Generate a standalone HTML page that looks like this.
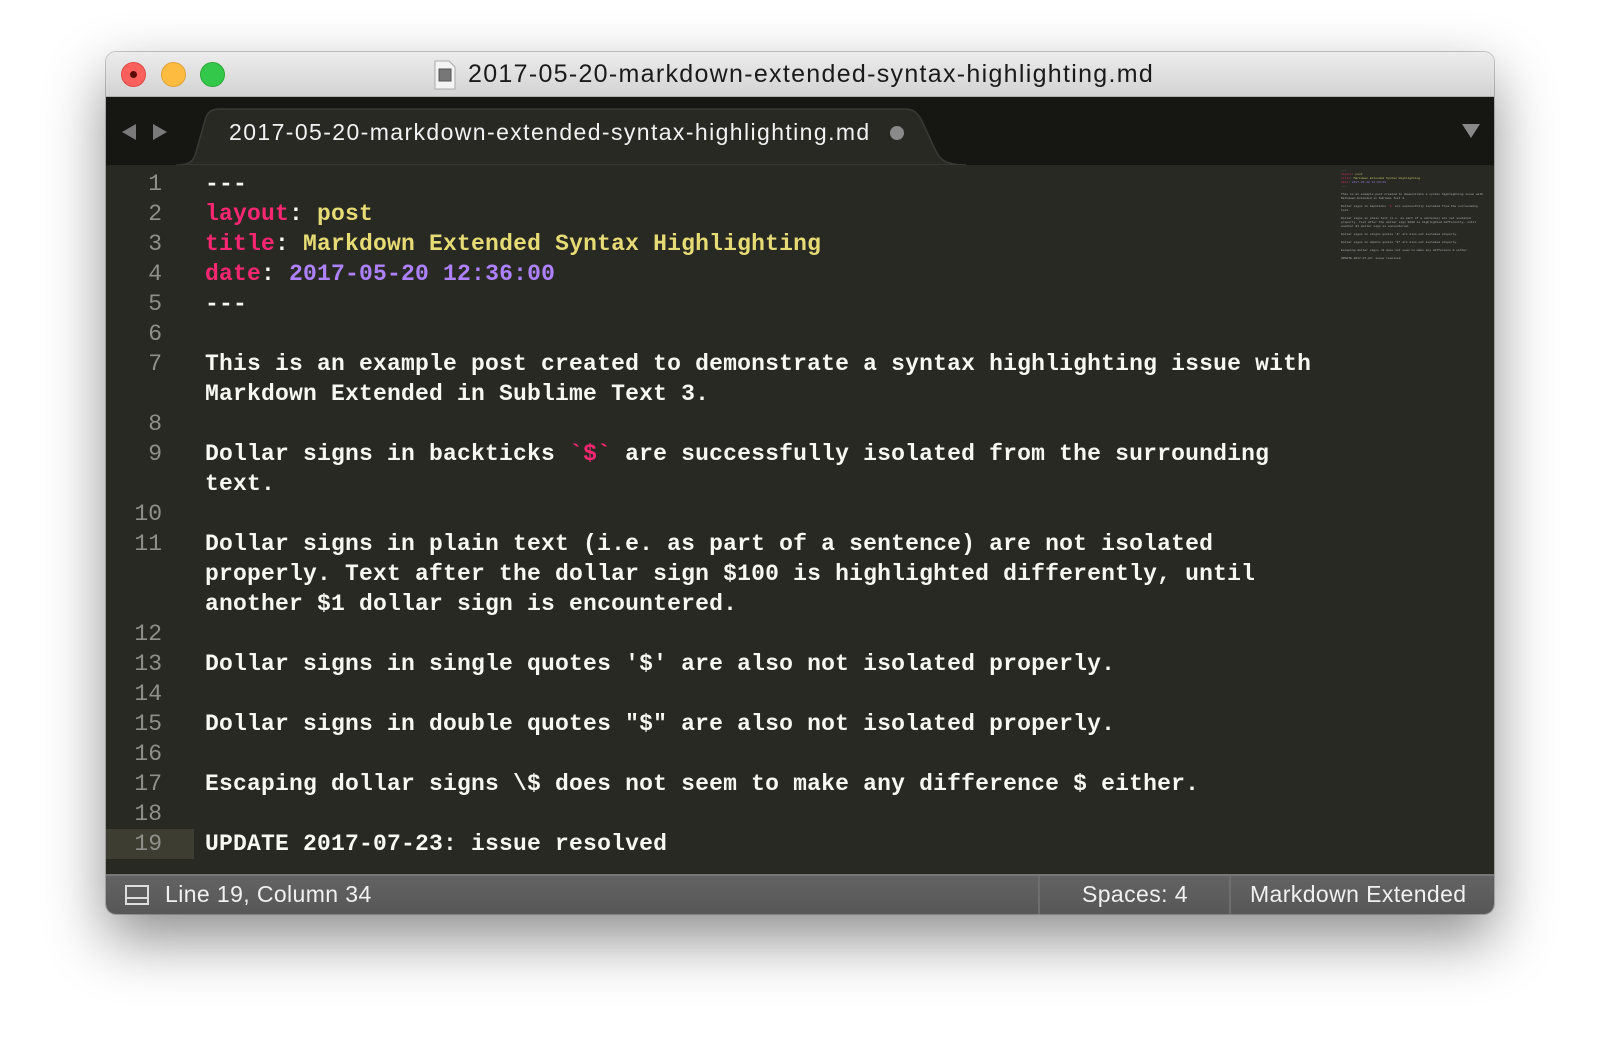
<!DOCTYPE html>
<html><head><meta charset="utf-8"><style>
*{margin:0;padding:0;box-sizing:border-box}
body{width:1599px;height:1063px;background:#fff;position:relative;overflow:hidden;font-family:"Liberation Sans",sans-serif}
#win{position:absolute;left:106px;top:52px;width:1388px;height:862px;border-radius:10px;overflow:hidden;box-shadow:0 25px 60px rgba(0,0,0,.45),0 0 0 1px rgba(0,0,0,.2)}
#title{position:absolute;left:0;top:0;width:100%;height:45px;background:linear-gradient(#ececec,#d3d3d3);border-bottom:1px solid #b0b0b0}
.tl{position:absolute;top:10px;width:25px;height:25px;border-radius:50%}
#ttext{position:absolute;left:362px;top:8px;font-size:25px;letter-spacing:1.3px;color:#1a1a1a;white-space:nowrap}
#tabbar{position:absolute;left:0;top:45px;width:100%;height:68px;background:#161613}
#editor{position:absolute;left:0;top:113px;width:100%;height:709px;background:#282923}
#status{position:absolute;left:0;top:822px;width:100%;height:40px;background:linear-gradient(#636363,#575757);border-top:2px solid #777;color:#f0f0f0;font-size:23px;letter-spacing:0.4px}
.ln{position:absolute;left:0;width:56px;text-align:right;color:#8f908a;font-family:"Liberation Mono",monospace;font-size:23px;line-height:30px}
.tx{position:absolute;left:99px;color:#f8f8f2;font-family:"Liberation Mono",monospace;font-size:23px;line-height:30px;white-space:pre;font-weight:bold;letter-spacing:0.2px}
.k{color:#f92672}.y{color:#e6db74}.p{color:#ae81ff}.r{color:#f92672}
</style></head><body>
<div id="win">
 <div id="title">
  <div class="tl" style="left:15px;background:#fc605c;border:1px solid #de4a45"><div style="position:absolute;left:8px;top:8px;width:7px;height:7px;border-radius:50%;background:#5a0a07"></div></div>
  <div class="tl" style="left:55px;background:#fdbc40;border:1px solid #dea236"></div>
  <div class="tl" style="left:94px;background:#34c84a;border:1px solid #27aa35"></div>
  <svg style="position:absolute;left:328px;top:8px" width="22" height="30"><path d="M1 1h14l6 6v22H1z" fill="#f4f4f4" stroke="#aaa"/><rect x="5" y="9" width="12" height="12" fill="#777" stroke="#555"/></svg>
  <div id="ttext">2017-05-20-markdown-extended-syntax-highlighting.md</div>
 </div>
 <div id="tabbar">
  <svg style="position:absolute;left:14px;top:26px" width="50" height="18"><path d="M2 9L16 1V17Z M33 1L47 9L33 17Z" fill="#7a7a7a"/></svg>
  <svg style="position:absolute;left:70px;top:10px" width="800" height="58"><path d="M0 58C18 58 18 52 22 38L30 10C33 3 38 2 44 2H728C736 2 740 4 745 12L758 40C763 52 768 58 790 58Z" fill="#282923" stroke="#3a3a35" stroke-width="1.5"/></svg>
  <div style="position:absolute;left:123px;top:22px;color:#f2f2f2;font-size:23px;white-space:nowrap;letter-spacing:1.4px">2017-05-20-markdown-extended-syntax-highlighting.md</div>
  <div style="position:absolute;left:784px;top:29px;width:14px;height:14px;border-radius:50%;background:#8a8a8a"></div>
  <svg style="position:absolute;left:1355px;top:26px" width="20" height="16"><path d="M1 1H19L10 15Z" fill="#888"/></svg>
 </div>
 <div id="editor">
  <div style="position:absolute;left:0;top:664px;width:88px;height:30px;background:#3e3d32"></div>
  <div class="ln" style="top:4px">1<br>2<br>3<br>4<br>5<br>6<br>7<br><br>8<br>9<br><br>10<br>11<br><br><br>12<br>13<br>14<br>15<br>16<br>17<br>18<br>19</div>
  <div class="tx" style="top:4px">---
<span class="k">layout</span>: <span class="y">post</span>
<span class="k">title</span>: <span class="y">Markdown Extended Syntax Highlighting</span>
<span class="k">date</span>: <span class="p">2017-05-20 12:36:00</span>
---

This is an example post created to demonstrate a syntax highlighting issue with
Markdown Extended in Sublime Text 3.

Dollar signs in backticks <span class="r">`$`</span> are successfully isolated from the surrounding
text.

Dollar signs in plain text (i.e. as part of a sentence) are not isolated
properly. Text after the dollar sign $100 is highlighted differently, until
another $1 dollar sign is encountered.

Dollar signs in single quotes '$' are also not isolated properly.

Dollar signs in double quotes "$" are also not isolated properly.

Escaping dollar signs \$ does not seem to make any difference $ either.

UPDATE 2017-07-23: issue resolved</div>
  <div style="position:absolute;left:1235px;top:4px;width:150px;font-family:'Liberation Mono',monospace;font-size:3px;line-height:4px;color:#ccc;white-space:pre;opacity:.8">---
<span class="k">layout</span>: <span class="y">post</span>
<span class="k">title</span>: <span class="y">Markdown Extended Syntax Highlighting</span>
<span class="k">date</span>: <span class="p">2017-05-20 12:36:00</span>
---

This is an example post created to demonstrate a syntax highlighting issue with
Markdown Extended in Sublime Text 3.

Dollar signs in backticks <span class="r">`$`</span> are successfully isolated from the surrounding
text.

Dollar signs in plain text (i.e. as part of a sentence) are not isolated
properly. Text after the dollar sign $100 is highlighted differently, until
another $1 dollar sign is encountered.

Dollar signs in single quotes '$' are also not isolated properly.

Dollar signs in double quotes "$" are also not isolated properly.

Escaping dollar signs \$ does not seem to make any difference $ either.

UPDATE 2017-07-23: issue resolved</div>
 </div>
 <div id="status">
  <svg style="position:absolute;left:19px;top:9px" width="24" height="20"><rect x="1" y="1" width="22" height="18" fill="none" stroke="#ddd" stroke-width="2"/><path d="M1 13H23" stroke="#ddd" stroke-width="2"/></svg>
  <div style="position:absolute;left:59px;top:5px">Line 19, Column 34</div>
  <div style="position:absolute;left:932px;top:0;width:2px;height:40px;background:#6e6e6e"></div>
  <div style="position:absolute;left:976px;top:5px">Spaces: 4</div>
  <div style="position:absolute;left:1123px;top:0;width:2px;height:40px;background:#6e6e6e"></div>
  <div style="position:absolute;left:1144px;top:5px">Markdown Extended</div>
 </div>
</div>
</body></html>
